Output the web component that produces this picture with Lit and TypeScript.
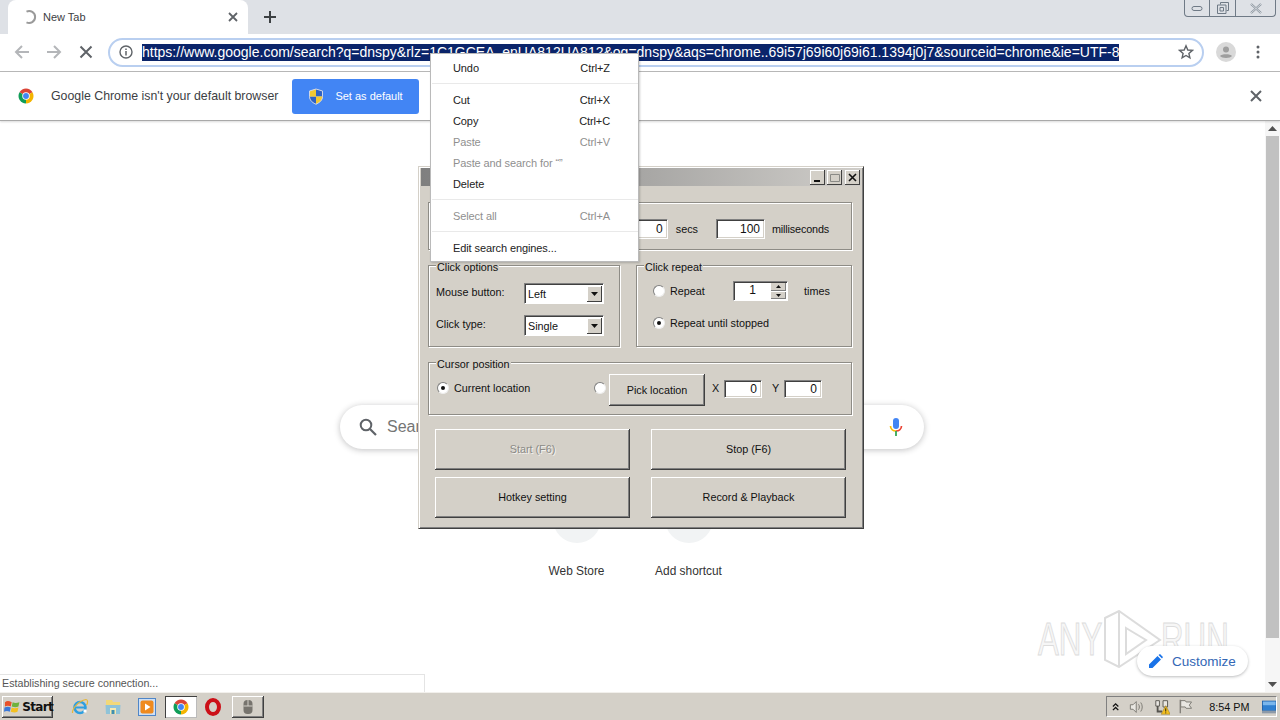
import { LitElement, html, css, svg } from 'lit';
import { customElement } from 'lit/decorators.js';

const chromeLogo = (size: number) => html`<svg width=${size} height=${size} viewBox="0 0 24 24">
  <path fill="#db4437" d="M12 12 3.34 7A10 10 0 0 1 20.66 7Z" />
  <path fill="#f4b400" d="M12 12 20.66 7A10 10 0 0 1 12 22Z" />
  <path fill="#0f9d58" d="M12 12 12 22A10 10 0 0 1 3.34 7Z" />
  <circle cx="12" cy="12" r="5" fill="#fff" />
  <circle cx="12" cy="12" r="3.9" fill="#4285f4" />
</svg>`;

const shield = svg`<svg width="16" height="17" viewBox="0 0 16 17">
  <defs><clipPath id="sh"><path d="M8 1 14.5 3V8.500C14.500 12.500 11 15 8 16.200 5 15 1.500 12.500 1.500 8.500V3Z" /></clipPath></defs>
  <g clip-path="url(#sh)">
    <rect width="16" height="17" fill="#e9e4d0" />
    <rect x="8" width="8" height="8.500" fill="#2f62c4" />
    <rect y="8.500" width="8" height="8.500" fill="#2f62c4" />
    <rect width="8" height="8.500" fill="#f2c832" />
    <rect x="8" y="8.500" width="8" height="8.500" fill="#f2c832" />
  </g>
  <path fill="none" stroke="#cfd6e6" d="M8 1 14.500 3V8.500C14.500 12.500 11 15 8 16.200 5 15 1.500 12.500 1.500 8.500V3Z" />
</svg>`;

@customElement('clicker-window')
export class ClickerWindow extends LitElement {
  static styles = css`
    :host {
      display: block;
      box-sizing: border-box;
      height: 100%;
      background: #d4d0c8;
      border: 1px solid;
      border-color: #d4d0c8 #404040 #404040 #d4d0c8;
      box-shadow: inset 1px 1px 0 #fff, inset -1px -1px 0 #808080;
      padding: 1px 2px 2px;
      font: 10.800px 'Liberation Sans', Arial, sans-serif;
      color: #111;
    }
    .title {
      height: 18px;
      display: flex;
      align-items: center;
      justify-content: flex-end;
      gap: 2px;
      padding-right: 1px;
      background: linear-gradient(90deg, #7f7f7f, #cfcdc9);
      margin-bottom: 16px;
    }
    .cap {
      box-sizing: border-box;
      width: 15px;
      height: 15px;
      background: #d4d0c8;
      box-shadow: inset -1px -1px #404040, inset 1px 1px #fff;
      display: flex;
      align-items: center;
      justify-content: center;
    }
    .cap.gap { margin-right: 1px; }
    .body {
      padding: 0 9px 0 7px;
      display: flex;
      flex-direction: column;
      gap: 15px;
    }
    .group {
      position: relative;
      box-sizing: border-box;
      border: 1px solid #8e8c86;
      box-shadow: 1px 1px 0 #fff, inset 1px 1px 0 #fff;
    }
    .legend {
      position: absolute;
      left: 7px;
      top: -6px;
      padding: 0 1px;
      background: #d4d0c8;
      line-height: 14px;
    }
    .interval {
      height: 48px;
      display: flex;
      align-items: center;
      padding-top: 6px;
      justify-content: flex-end;
      padding-right: 22px;
    }
    .interval .edit { height: 20px; line-height: 18px; }
    .interval span.unit { margin: 0 18px 0 8px; }
    .interval span.unit.last { margin: 0 0 0 7px; letter-spacing: -0.15px; }
    .edit {
      box-sizing: border-box;
      background: #fff;
      border: 1px solid;
      border-color: #808080 #fff #fff #808080;
      box-shadow: inset 1px 1px 0 #404040, inset -1px -1px 0 #d4d0c8;
      text-align: right;
      padding-right: 4px;
      font-size: 12px;
    }
    .row2 {
      display: grid;
      grid-template-columns: 192px 216px;
      gap: 16px;
    }
    .options {
      height: 82px;
      display: grid;
      grid-template-columns: 88px 80px;
      grid-auto-rows: 21px;
      row-gap: 11px;
      align-items: center;
      padding: 17px 0 0 7px;
    }
    .options > span:not(.legend) { padding-bottom: 3px; }
    .combo {
      box-sizing: border-box;
      height: 21px;
      background: #fff;
      border: 1px solid;
      border-color: #808080 #fff #fff #808080;
      box-shadow: inset 1px 1px 0 #404040;
      display: flex;
      align-items: center;
      justify-content: space-between;
      padding: 1px 1px 1px 3px;
    }
    .combo i {
      width: 15px;
      height: 16px;
      background: #d4d0c8;
      box-shadow: inset -1px -1px #404040, inset 1px 1px #fff;
      display: flex;
      align-items: center;
      justify-content: center;
    }
    .repeat {
      height: 82px;
      padding: 15px 0 0 16px;
      display: flex;
      flex-direction: column;
      gap: 12px;
    }
    .line {
      display: flex;
      align-items: center;
      height: 20px;
    }
    .radio {
      box-sizing: border-box;
      width: 12px;
      height: 12px;
      border-radius: 50%;
      background: #fff;
      border: 1px solid;
      border-color: #808080 #eee #eee #808080;
      display: flex;
      align-items: center;
      justify-content: center;
      flex: none;
    }
    .radio.on::after {
      content: '';
      width: 4px;
      height: 4px;
      border-radius: 50%;
      background: #111;
    }
    .repeat .radio { margin-right: 5px; }
    .repeat-label { width: 63px; }
    .spin {
      box-sizing: border-box;
      width: 55px;
      height: 20px;
      margin-right: 16px;
      background: #fff;
      border: 1px solid;
      border-color: #808080 #fff #fff #808080;
      box-shadow: inset 1px 1px 0 #404040;
      display: flex;
      align-items: stretch;
      font-size: 12px;
    }
    .spin b {
      flex: 1;
      text-align: center;
      font-weight: 400;
      line-height: 17px;
    }
    .spin div {
      width: 15px;
      display: grid;
      grid-template-rows: 1fr 1fr;
      gap: 1px;
      padding: 1px 1px 1px 0;
    }
    .spin u {
      background: #d4d0c8;
      box-shadow: inset -1px -1px #808080;
      display: flex;
      align-items: center;
      justify-content: center;
    }
    .cursor {
      height: 53px;
      display: flex;
      align-items: center;
      padding: 3px 0 0 8px;
    }
    .cursor .radio, .cursor .lift { margin-bottom: 5px; }
    .cursor .axis {
      width: 10px;
      margin-bottom: 4px;
    }
    .btn {
      box-sizing: border-box;
      background: #d4d0c8;
      box-shadow: inset -1px -1px #404040, inset 1px 1px #fff, inset -2px -2px #808080;
      display: flex;
      align-items: center;
      justify-content: center;
      padding-bottom: 1px;
    }
    .btn.off {
      color: #8a8a86;
      text-shadow: 1px 1px 0 #f4f2ee;
    }
    .pick {
      width: 96px;
      height: 32px;
      margin: 0 7px 0 3px;
    }
    .coord {
      width: 38px;
      height: 18px;
      line-height: 16px;
      margin: 0 10px 2px 2px;
    }
    .actions {
      display: grid;
      grid-template-columns: 195px 195px;
      grid-auto-rows: 41px;
      gap: 7px 21px;
      padding-left: 7px;
      margin-top: -1px;
    }
  `;

  private arrow(color = '#111') {
    return html`<svg width="7" height="4" viewBox="0 0 7 4"><path d="M0 0h7L3.500 4z" fill=${color} /></svg>`;
  }

  render() {
    return html`
      <div class="title">
        <div class="cap"><svg width="9" height="9"><rect x="1" y="7" width="6" height="2" fill="#111" /></svg></div>
        <div class="cap gap"><svg width="10" height="9"><path d="M.5 1.500h9v7h-9z" fill="none" stroke="#8a8a86" /></svg></div>
        <div class="cap"><svg width="9" height="9"><path d="M1 1 8 8M8 1 1 8" stroke="#111" stroke-width="1.600" /></svg></div>
      </div>
      <div class="body">
        <div class="group interval">
          <span class="legend">Click interval</span>
          <div class="edit" style="width:48px">0</div><span class="unit">secs</span>
          <div class="edit" style="width:49px">100</div><span class="unit last">milliseconds</span>
        </div>
        <div class="row2">
          <div class="group options">
            <span class="legend">Click options</span>
            <span>Mouse button:</span>
            <div class="combo">Left<i>${this.arrow()}</i></div>
            <span>Click type:</span>
            <div class="combo">Single<i>${this.arrow()}</i></div>
          </div>
          <div class="group repeat">
            <span class="legend">Click repeat</span>
            <div class="line">
              <span class="radio"></span><span class="repeat-label">Repeat</span>
              <div class="spin">
                <b>1</b>
                <div>
                  <u><svg width="5" height="3"><path d="M2.500 0 5 3H0z" fill="#111" /></svg></u>
                  <u><svg width="5" height="3"><path d="M0 0h5L2.500 3z" fill="#111" /></svg></u>
                </div>
              </div>
              <span>times</span>
            </div>
            <div class="line"><span class="radio on"></span><span>Repeat until stopped</span></div>
          </div>
        </div>
        <div class="group cursor">
          <span class="legend">Cursor position</span>
          <span class="radio on" style="margin-right:5px"></span>
          <span class="lift" style="width:140px">Current location</span>
          <span class="radio"></span>
          <div class="btn pick">Pick location</div>
          <span class="axis">X</span><div class="edit coord">0</div>
          <span class="axis">Y</span><div class="edit coord" style="margin-right:0">0</div>
        </div>
        <div class="actions">
          <div class="btn off">Start (F6)</div>
          <div class="btn">Stop (F6)</div>
          <div class="btn">Hotkey setting</div>
          <div class="btn">Record &amp; Playback</div>
        </div>
      </div>
    `;
  }
}

@customElement('win-taskbar')
export class WinTaskbar extends LitElement {
  static styles = css`
    :host {
      display: flex;
      align-items: center;
      box-sizing: border-box;
      height: 28px;
      flex: none;
      background: #d4d0c8;
      border-top: 1px solid #f2f0ec;
      padding: 0 3px 0 2px;
      font: 10.800px 'Liberation Sans', Arial, sans-serif;
      color: #111;
    }
    .start {
      box-sizing: border-box;
      width: 51px;
      height: 22px;
      display: flex;
      align-items: center;
      gap: 2px;
      padding-left: 2px;
      box-shadow: inset -1px -1px #404040, inset 1px 1px #fff, inset -2px -2px #808080;
      font: 700 12px 'DejaVu Sans', sans-serif;
      letter-spacing: -0.7px;
      margin-right: 10px;
    }
    .slot {
      width: 33.500px;
      height: 22px;
      display: flex;
      align-items: center;
      justify-content: center;
      flex: none;
    }
    .slot.active {
      box-sizing: border-box;
      width: 32px;
      margin-left: 1px;
      background: #fff;
      box-shadow: inset 1px 1px #404040, inset -1px -1px #bbb;
    }
    .slot.raised {
      box-sizing: border-box;
      width: 32px;
      margin-left: 2px;
      box-shadow: inset -1px -1px #404040, inset 1px 1px #fff, inset -2px -2px #808080;
    }
    .tray {
      margin-left: auto;
      box-sizing: border-box;
      width: 171px;
      height: 21px;
      display: flex;
      align-items: center;
      border: 1px solid;
      border-color: #808080 #fff #fff #808080;
      padding-left: 5px;
    }
    .clock { margin: 0 12px 0 17px; white-space: nowrap; }
  `;

  render() {
    return html`
      <div class="start">
        <svg width="17" height="16" viewBox="0 0 17 16">
          <path fill="#e8512a" d="M1 3C3 1.500 5 1.500 8 3L7 7.500C5 6.500 3 6.500 1 7.500Z" />
          <path fill="#6fb23c" d="M9 3C11 4 13 4 16 3L15 7.500C13 8.500 11 8.500 8 7.500Z" />
          <path fill="#3b78d8" d="M.500 8.500C3 7.500 5 7.500 7 8.500L6 13C4 12 2 12 0 13Z" />
          <path fill="#f4c020" d="M8 8.500C10 9.500 12 9.500 15 8.500L14 13C12 14 10 14 7 13Z" />
        </svg>
        Start
      </div>
      <div class="slot">
        <svg width="18" height="18" viewBox="0 0 18 18">
          <circle cx="9" cy="9.500" r="5.500" fill="none" stroke="#2f9fe0" stroke-width="2.600" />
          <path d="M4 9.500h10" stroke="#2f9fe0" stroke-width="2" />
          <path d="M12.500 13h3" stroke="#fff" stroke-width="3" />
          <path d="M1.500 15C1 11 7 3 15 1.500 17 1.500 17 5 15.500 7" fill="none" stroke="#e6b73a" stroke-width="1.200" />
        </svg>
      </div>
      <div class="slot">
        <svg width="18" height="16" viewBox="0 0 18 16">
          <path fill="#f2d878" d="M2 1h6l1 2h7v3H2z" />
          <path fill="#8fc3d8" d="M1.500 6h15l-.5 9H2z" />
          <path fill="#f5e9b0" d="M6 9h6v6H6z" />
          <path fill="#3f8fb0" d="M7.500 11h3v4h-3z" />
        </svg>
      </div>
      <div class="slot">
        <svg width="18" height="18" viewBox="0 0 18 18">
          <rect x=".5" y=".5" width="17" height="17" fill="#cfe0f5" stroke="#4f86c8" />
          <rect x="2.500" y="2.500" width="13" height="13" rx="2" fill="#ef8a1e" />
          <path d="M7 5.500v7l5.500-3.500z" fill="#fff" />
        </svg>
      </div>
      <div class="slot active">${chromeLogo(18)}</div>
      <div class="slot">
        <svg width="18" height="18" viewBox="0 0 18 18">
          <ellipse cx="9" cy="9" rx="6" ry="7" fill="none" stroke="#cc1018" stroke-width="4" />
        </svg>
      </div>
      <div class="slot raised">
        <svg width="12" height="16" viewBox="0 0 12 16">
          <rect x="1.500" y="1" width="9" height="14" rx="4" fill="#77746e" />
          <path d="M6 1v6M1.500 7h9" stroke="#d4d0c8" />
        </svg>
      </div>
      <div class="tray">
        <svg width="8" height="10" viewBox="0 0 8 10" style="margin-right:10px">
          <path d="M1 4.500 4 1.500 7 4.500M1 8.500 4 5.500 7 8.500" fill="none" stroke="#111" stroke-width="1.400" />
        </svg>
        <svg width="17" height="16" viewBox="0 0 17 16" style="margin-right:9px">
          <path d="M1.500 5.500h3L8 2v12L4.500 10.500h-3z" fill="#e9e7e2" stroke="#77746e" />
          <path d="M10.500 5c1.300 1.800 1.300 4.200 0 6M13 3c2.200 3 2.200 7 0 10" fill="none" stroke="#77746e" />
        </svg>
        <svg width="18" height="18" viewBox="0 0 18 18" style="margin-right:8px">
          <path d="M2 2h4v6H2zM10 2h5v7h-5z" fill="#e9e7e2" stroke="#55534e" />
          <path d="M4 8v6h5" fill="none" stroke="#55534e" stroke-width="2" />
          <path d="M13 7.500 18 17H8z" fill="#f4c020" stroke="#8a6a10" stroke-width=".5" />
          <path d="M13 10.500v3.500M13 15v1" stroke="#111" />
        </svg>
        <svg width="16" height="17" viewBox="0 0 16 17">
          <path d="M2.500 1v15" stroke="#77746e" stroke-width="1.300" />
          <path d="M3 2h5l1 1.500h6L12.500 7 15 10.500H9L8 9H3z" fill="#e9e7e2" stroke="#77746e" />
        </svg>
        <span class="clock">8:54 PM</span>
        <svg width="16" height="14" viewBox="0 0 16 14">
          <rect x=".5" y=".5" width="15" height="11" fill="#2f7fd0" stroke="#1d5fa8" />
          <rect x="1" y="1" width="14" height="4" fill="#7ab6ec" />
          <rect y="11" width="16" height="3" fill="#8d9aa8" />
        </svg>
      </div>
    `;
  }
}

@customElement('app-root')
export class AppRoot extends LitElement {
  static styles = css`
    :host {
      display: flex;
      flex-direction: column;
      position: relative;
      width: 1280px;
      height: 720px;
      overflow: hidden;
      background: #fff;
      font: 12px 'Liberation Sans', Arial, sans-serif;
      color: #333;
    }
    .tabstrip {
      height: 34px;
      flex: none;
      display: flex;
      background: #dee1e6;
      padding-left: 8px;
    }
    .tab {
      position: relative;
      width: 240px;
      height: 34px;
      box-sizing: border-box;
      background: #fff;
      border-radius: 8px 8px 0 0;
      display: flex;
      align-items: center;
      padding: 0 10px 0 14px;
      font-size: 11px;
      color: #3c4043;
    }
    .tab svg:first-child { margin-right: 5px; }
    .tab span { flex: 1; }
    .newtab { margin: 9px 0 0 14px; height: 16px; }
    .caption {
      margin-left: auto;
      margin-right: 4px;
      box-sizing: border-box;
      width: 92px;
      height: 17px;
      display: grid;
      grid-template-columns: 24px 26px 1fr;
      border: 1px solid #6f7a86;
      border-top: 0;
      border-radius: 0 0 4px 4px;
    }
    .caption div {
      display: flex;
      align-items: center;
      justify-content: center;
    }
    .caption div + div { border-left: 1px solid #6f7a86; }
    .toolbar {
      box-sizing: border-box;
      height: 38px;
      flex: none;
      display: flex;
      align-items: center;
      border-bottom: 1px solid #b9b9b9;
      padding: 0 19px 1px 14px;
    }
    .nav {
      width: 32px;
      margin-left: -8px;
      margin-right: 8px;
      display: flex;
      justify-content: center;
    }
    .omnibox {
      box-sizing: border-box;
      width: 1096px;
      height: 29px;
      margin-left: -2px;
      margin-right: 12px;
      border: 2px solid #b9cff0;
      border-radius: 15px;
      display: flex;
      align-items: center;
      padding-left: 9px;
      flex: none;
    }
    .url {
      margin-left: 9px;
      height: 17px;
      line-height: 17px;
      background: #0a246a;
      color: #fff;
      font-size: 14px;
      white-space: nowrap;
    }
    .star { margin-left: auto; margin-right: 8px; }
    .avatar { margin-right: 20px; }
    .infobar {
      box-sizing: border-box;
      height: 49px;
      flex: none;
      display: flex;
      align-items: center;
      padding: 0 18px 0 17px;
      border-bottom: 1px solid #a9a9a9;
      box-shadow: 0 1px 2px rgba(0, 0, 0, 0.15);
      font-size: 12.350px;
      color: #3c4043;
      position: relative;
    }
    .infobar > svg:first-child { margin-right: 16px; }
    .setdefault {
      margin-left: 14px;
      width: 127px;
      height: 35px;
      background: #4285f4;
      border-radius: 3px;
      color: #fff;
      display: flex;
      align-items: center;
      padding-left: 16px;
      gap: 11px;
      box-sizing: border-box;
      font-size: 11px;
    }
    .infoclose { margin-left: auto; }
    .page {
      flex: 1;
      display: flex;
      min-height: 0;
    }
    .main {
      flex: 1;
      position: relative;
      display: flex;
      flex-direction: column;
      align-items: center;
      padding-top: 284px;
    }
    .search {
      box-sizing: border-box;
      width: 584px;
      height: 44px;
      margin-right: 1px;
      border-radius: 22px;
      background: #fff;
      box-shadow: 0 1px 6px rgba(32, 33, 36, 0.28);
      display: flex;
      align-items: center;
      padding: 0 21px 0 20px;
      gap: 10px;
      font-size: 16px;
      color: #757575;
    }
    .search span { flex: 1; }
    .tiles {
      display: flex;
      margin-top: 46px;
    }
    .tile {
      width: 112px;
      display: flex;
      flex-direction: column;
      align-items: center;
      gap: 21px;
      font-size: 11.900px;
      color: #333;
    }
    .tile i {
      width: 48px;
      height: 48px;
      border-radius: 50%;
      background: #f1f3f4;
    }
    .scrollbar {
      width: 15px;
      flex: none;
      background: #f6f6f6;
      display: flex;
      flex-direction: column;
      align-items: center;
      justify-content: space-between;
    }
    .thumb {
      width: 13px;
      height: 502px;
      background: #c1c1c1;
    }
    .scrollbar .top {
      display: flex;
      flex-direction: column;
      align-items: center;
      gap: 5px;
      padding-top: 5px;
    }
    .scrollbar .bottom { padding-bottom: 5px; display: flex; }
    .status {
      position: absolute;
      left: 0;
      bottom: 0;
      box-sizing: border-box;
      width: 425px;
      height: 18px;
      border: 1px solid #e4e4e4;
      border-width: 1px 1px 0 0;
      background: #fff;
      padding-left: 2px;
      line-height: 16px;
      font-size: 10.700px;
      color: #555;
    }
    .watermark {
      position: absolute;
      right: 33px;
      bottom: 24px;
      width: 194px;
      height: 58px;
      display: flex;
      align-items: center;
      font-size: 46px;
      color: #f6f6f6;
      -webkit-text-stroke: 1px #dcdcdc;
    }
    .watermark span {
      width: 64px;
      transform: scaleX(0.68);
      transform-origin: left center;
    }
    .watermark svg { margin: 0 -3px 0 0; flex: none; }
    .customize {
      position: absolute;
      right: 17px;
      bottom: 16px;
      box-sizing: border-box;
      width: 111px;
      height: 30px;
      background: #fff;
      border-radius: 15px;
      box-shadow: 0 1px 3px rgba(60, 64, 67, 0.35);
      display: flex;
      align-items: center;
      padding-left: 12px;
      gap: 9px;
      font-size: 13.500px;
      color: #3367b5;
    }
    .dialog {
      position: absolute;
      left: 418px;
      top: 166px;
      width: 446px;
      height: 363px;
    }
    .menu {
      position: absolute;
      left: 430px;
      top: 53px;
      width: 209px;
      box-sizing: border-box;
      padding: 3px 0 3px;
      background: #fff;
      border: 1px solid #bababa;
      box-shadow: 1px 1px 2px rgba(0, 0, 0, 0.2);
      font: 11px 'Liberation Sans', Arial, sans-serif;
      letter-spacing: -0.1px;
      color: #222;
    }
    .item {
      height: 21px;
      display: flex;
      justify-content: space-between;
      align-items: center;
      padding: 0 28px 0 22px;
    }
    .item.off { color: #8f8f8f; }
    .sep {
      height: 1px;
      margin: 5px 0 5px 1px;
      background: #e9e9e9;
    }
  `;

  render() {
    return html`
      <div class="tabstrip">
        <div class="tab">
          <svg width="16" height="16" viewBox="0 0 16 16">
            <path d="M4.500 2.600A6 6 0 1 1 4.500 13.400" fill="none" stroke="#9a9a9a" stroke-width="2" />
          </svg>
          <span>New Tab</span>
          <svg width="10" height="10" viewBox="0 0 10 10"><path d="M1 1 9 9M9 1 1 9" stroke="#5f6368" stroke-width="1.800" /></svg>
        </div>
        <svg class="newtab" width="16" height="16" viewBox="0 0 16 16"><path d="M8 2v12M2 8h12" stroke="#3c4043" stroke-width="2" /></svg>
        <div class="caption">
          <div><svg width="14" height="8" viewBox="0 0 14 8"><rect x="2" y="2.500" width="10" height="4" rx="2" fill="none" stroke="#6f7a86" /></svg></div>
          <div><svg width="12" height="12" viewBox="0 0 12 12"><path d="M3.500 2.500V.5h8v8h-2M.5 3h8.500v8.500H.5zM3 5.500h3.500V9H3z" fill="none" stroke="#6f7a86" /></svg></div>
          <div><svg width="12" height="11" viewBox="0 0 12 11"><path d="M1 1 11 10M11 1 1 10" stroke="#8a949e" stroke-width="2.200" /><path d="M1 1 11 10M11 1 1 10" stroke="#e6e8ec" stroke-width=".8" /></svg></div>
        </div>
      </div>

      <div class="toolbar">
        <div class="nav"><svg width="16" height="16" viewBox="0 0 16 16"><path d="M15 8H2M8 2 2 8l6 6" fill="none" stroke="#b4b6b9" stroke-width="2" /></svg></div>
        <div class="nav"><svg width="16" height="16" viewBox="0 0 16 16"><path d="M1 8h13M8 2l6 6-6 6" fill="none" stroke="#b4b6b9" stroke-width="2" /></svg></div>
        <div class="nav"><svg width="14" height="14" viewBox="0 0 14 14"><path d="M1.500 1.500 12.500 12.500M12.500 1.500 1.500 12.500" stroke="#5f6368" stroke-width="2" /></svg></div>
        <div class="omnibox">
          <svg width="14" height="14" viewBox="0 0 14 14">
            <circle cx="7" cy="7" r="6" fill="none" stroke="#5f6368" stroke-width="1.400" />
            <path d="M7 6v4.500M7 3.500v1.500" stroke="#5f6368" stroke-width="1.500" />
          </svg>
          <span class="url">https://www.google.com/search?q=dnspy&amp;rlz=1C1GCEA_enUA812UA812&amp;oq=dnspy&amp;aqs=chrome..69i57j69i60j69i61.1394j0j7&amp;sourceid=chrome&amp;ie=UTF-8</span>
          <svg class="star" width="16" height="16" viewBox="0 0 16 16">
            <path d="M8 1.800 9.800 6l4.600.4-3.500 3 1 4.500L8 11.500 4.100 13.900l1-4.500-3.500-3L6.200 6z" fill="none" stroke="#5f6368" stroke-width="1.400" />
          </svg>
        </div>
        <svg class="avatar" width="20" height="20" viewBox="0 0 20 20">
          <circle cx="10" cy="10" r="10" fill="#d9d9d9" />
          <circle cx="10" cy="7.500" r="3" fill="#9e9e9e" />
          <path d="M4 14c1.500-2.500 10.500-2.500 12 0-1.500 2.500-10.500 2.500-12 0z" fill="#9e9e9e" />
        </svg>
        <svg width="4" height="14" viewBox="0 0 4 14">
          <circle cx="2" cy="2" r="1.500" fill="#5f6368" /><circle cx="2" cy="7" r="1.500" fill="#5f6368" /><circle cx="2" cy="12" r="1.500" fill="#5f6368" />
        </svg>
      </div>

      <div class="infobar">
        ${chromeLogo(18)}
        <span>Google Chrome isn't your default browser</span>
        <div class="setdefault">${shield}<span>Set as default</span></div>
        <svg class="infoclose" width="12" height="12" viewBox="0 0 12 12"><path d="M1 1 11 11M11 1 1 11" stroke="#5f6368" stroke-width="2" /></svg>
      </div>

      <div class="page">
        <div class="main">
          <div class="search">
            <svg width="18" height="18" viewBox="0 0 18 18" style="margin-left:-1px">
              <circle cx="7" cy="7" r="5.300" fill="none" stroke="#5f6368" stroke-width="2" />
              <path d="M11 11l6 6" stroke="#5f6368" stroke-width="2.200" />
            </svg>
            <span>Search Google or type a URL</span>
            <svg width="14" height="20" viewBox="0 0 14 20">
              <rect x="4" y="1" width="6" height="11" rx="3" fill="#4285f4" />
              <path d="M1.500 9c0 3 2.500 5 5.500 5" fill="none" stroke="#fbbc05" stroke-width="1.700" />
              <path d="M12.500 9c0 3-2.500 5-5.500 5" fill="none" stroke="#ea4335" stroke-width="1.700" />
              <path d="M7 14v5" stroke="#34a853" stroke-width="1.800" />
            </svg>
          </div>
          <div class="tiles">
            <div class="tile"><i></i>Web Store</div>
            <div class="tile"><i></i>Add shortcut</div>
          </div>
          <div class="status">Establishing secure connection...</div>
          <div class="watermark">
            <span>ANY</span>
            <svg width="62" height="58" viewBox="0 0 62 58">
              <path d="M3 8 17 1 58 30 17 57 3 50zM17 1v56M24 18 44 30 24 44z" fill="none" stroke="#dcdcdc" stroke-width="2" />
            </svg>
            <span>RUN</span>
          </div>
          <div class="customize">
            <svg width="14" height="14" viewBox="0 0 14 14"><path d="M0 14V10.500L8.500 2 12 5.500 3.500 14zM9.500 1 11 0 14 3 13 4.500z" fill="#1a73e8" /></svg>
            <span>Customize</span>
          </div>
        </div>
        <div class="scrollbar">
          <div class="top">
            <svg width="9" height="5"><path d="M4.500 0 9 5H0z" fill="#505050" /></svg>
            <div class="thumb"></div>
          </div>
          <div class="bottom"><svg width="9" height="5"><path d="M0 0h9L4.500 5z" fill="#505050" /></svg></div>
        </div>
      </div>

      <win-taskbar></win-taskbar>

      <clicker-window class="dialog"></clicker-window>

      <div class="menu">
        <div class="item"><span>Undo</span><span>Ctrl+Z</span></div>
        <div class="sep"></div>
        <div class="item"><span>Cut</span><span>Ctrl+X</span></div>
        <div class="item"><span>Copy</span><span>Ctrl+C</span></div>
        <div class="item off"><span>Paste</span><span>Ctrl+V</span></div>
        <div class="item off"><span>Paste and search for “”</span></div>
        <div class="item"><span>Delete</span></div>
        <div class="sep"></div>
        <div class="item off"><span>Select all</span><span>Ctrl+A</span></div>
        <div class="sep"></div>
        <div class="item"><span>Edit search engines...</span></div>
      </div>
    `;
  }
}
